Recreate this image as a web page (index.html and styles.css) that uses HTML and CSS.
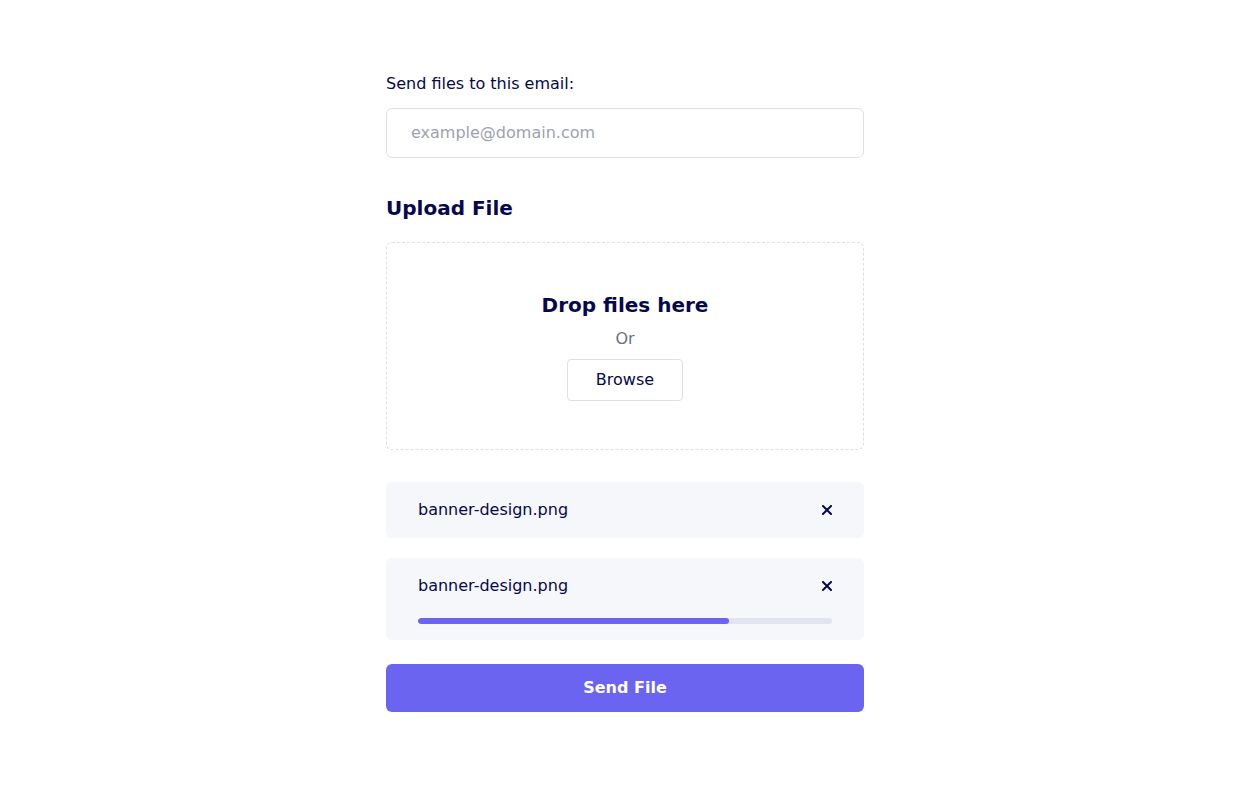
FILE: index.html
```html
<!DOCTYPE html>
<html lang="en">
<head>
<meta charset="utf-8">
<title>Upload File</title>
<link rel="stylesheet" href="styles.css">
</head>
<body>
<main class="wrapper">
  <form class="form">
    <label class="label" for="email">Send files to this email:</label>
    <input class="input" id="email" type="email" placeholder="example@domain.com">

    <h2 class="heading">Upload File</h2>

    <div class="dropzone">
      <span class="drop-title">Drop files here</span>
      <span class="drop-or">Or</span>
      <button type="button" class="browse">Browse</button>
    </div>

    <div class="file-item">
      <div class="file-row">
        <span class="file-name">banner-design.png</span>
        <button type="button" class="close" aria-label="Remove">
          <svg width="10" height="10" viewBox="0 0 10 10"><path d="M1 1L9 9M9 1L1 9" stroke="#07074D" stroke-width="2" stroke-linecap="square"/></svg>
        </button>
      </div>
    </div>

    <div class="file-item">
      <div class="file-row">
        <span class="file-name">banner-design.png</span>
        <button type="button" class="close" aria-label="Remove">
          <svg width="10" height="10" viewBox="0 0 10 10"><path d="M1 1L9 9M9 1L1 9" stroke="#07074D" stroke-width="2" stroke-linecap="square"/></svg>
        </button>
      </div>
      <div class="progress"><div class="progress-fill" style="width:75%"></div></div>
    </div>

    <button type="button" class="send">Send File</button>
  </form>
</main>
</body>
</html>
```
FILE: styles.css
```css
* { box-sizing: border-box; }
html, body { margin: 0; padding: 0; background: #fff; }
body { font-family: "DejaVu Sans", sans-serif; color: #07074D; }

.wrapper { display: flex; justify-content: center; padding-top: 73px; }
.form { width: 478px; display: flex; flex-direction: column; }

.label { display: block; font-size: 16px; line-height: 22px; margin-bottom: 13px; color: #07074D; }
.input {
  height: 50px; width: 100%; border: 1px solid #e0e0e0; border-radius: 6px;
  padding: 0 24px 2px; font-family: inherit; font-size: 16px; color: #6B7280; outline: none; background: #fff;
}
.input::placeholder { color: #9ca3af; }

.heading { margin: 36px 0 20px; font-size: 20px; line-height: 28px; font-weight: 700; color: #07074D; }

.dropzone {
  height: 208px; border: 1px dashed #e0e0e0; border-radius: 6px;
  display: flex; flex-direction: column; align-items: center; justify-content: center;
  margin-bottom: 32px;
}
.drop-title { font-size: 20px; line-height: 28px; font-weight: 700; margin-bottom: 8px; }
.drop-or { font-size: 16px; line-height: 24px; color: #6B7280; margin-bottom: 8px; }
.browse {
  font-family: inherit; font-size: 16px; line-height: 24px; color: #07074D;
  background: #fff; border: 1px solid #e0e0e0; border-radius: 4px; padding: 8px 28px;
}

.file-item { background: #F5F7FB; border-radius: 6px; padding: 16px 32px; margin-bottom: 20px; }
.file-item:last-of-type { margin-bottom: 24px; }
.file-row { display: flex; justify-content: space-between; align-items: center; height: 24px; }
.file-name { font-size: 16px; line-height: 24px; color: #07074D; }
.close { border: 0; background: none; padding: 0; display: flex; width: 10px; height: 10px; }
.progress { margin-top: 20px; height: 6px; border-radius: 6px; background: #E2E5EF; overflow: hidden; }
.progress-fill { height: 100%; background: #6A64F1; border-radius: 6px; }

.send {
  height: 48px; width: 100%; border: 0; border-radius: 6px; background: #6A64F1; color: #fff;
  padding: 0 0 2px; font-family: inherit; font-size: 16px; font-weight: 700;
}
```
